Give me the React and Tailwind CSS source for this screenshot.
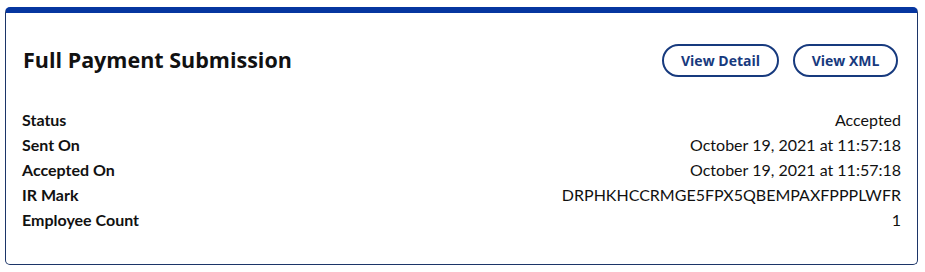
import React from "react";

const rows = [
  { label: "Status", value: "Accepted" },
  { label: "Sent On", value: "October 19, 2021 at 11:57:18" },
  { label: "Accepted On", value: "October 19, 2021 at 11:57:18" },
  { label: "IR Mark", value: "DRPHKHCCRMGE5FPX5QBEMPAXFPPPLWFR" },
  { label: "Employee Count", value: "1" },
];

export default function App() {
  return (
    <div className="min-h-[272px] bg-white pt-[7px] pl-[5px]" style={{ fontFamily: "Lato, sans-serif" }}>
      <div className="w-[913px] h-[258px] rounded-[5px] border border-[#1c3568] border-t-[6px] border-t-[#0636a0] bg-white px-4 pt-[31px]">
        {/* Header */}
        <div className="flex items-center justify-between h-[33px]">
          <h2
            className="text-[21.5px] font-bold text-[#111] pl-[1px]"
            style={{ fontFamily: "'Open Sans', sans-serif" }}
          >
            Full Payment Submission
          </h2>
          <div className="flex gap-[14px] pr-[3px]">
            <button
              className="h-[33px] w-[117px] rounded-full border-2 border-[#173a7e] text-[14px] font-bold text-[#173a7e]"
              style={{ fontFamily: "'Open Sans', sans-serif" }}
            >
              View Detail
            </button>
            <button
              className="h-[33px] w-[105px] rounded-full border-2 border-[#173a7e] text-[14px] font-bold text-[#173a7e]"
              style={{ fontFamily: "'Open Sans', sans-serif" }}
            >
              View XML
            </button>
          </div>
        </div>

        {/* Details */}
        <div className="mt-[30px]">
          {rows.map((r) => (
            <div key={r.label} className="flex justify-between h-[25px] items-center text-[16px] text-[#111]">
              <span className="font-bold">{r.label}</span>
              <span>{r.value}</span>
            </div>
          ))}
        </div>
      </div>
    </div>
  );
}
